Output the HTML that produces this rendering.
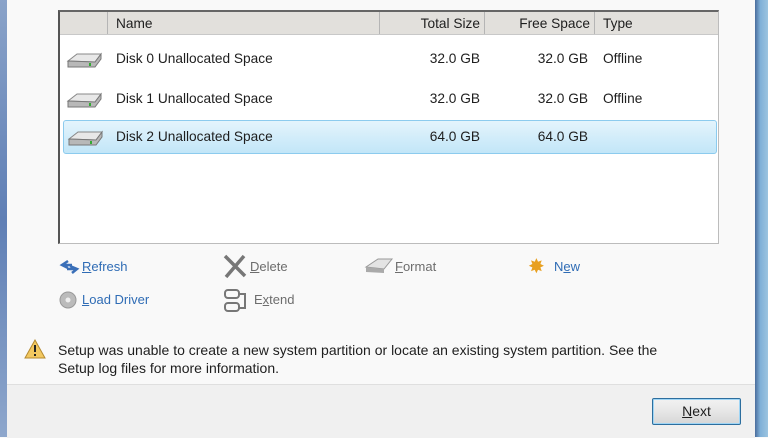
<!DOCTYPE html>
<html><head><style>
body{margin:0;width:768px;height:437px;overflow:hidden;background:#f9f9f9;font-family:"Liberation Sans",sans-serif;font-size:13.7px;color:#1e1e1e;position:relative}
.abs{position:absolute}
.lstrip{left:0;top:0;width:7px;height:437px;background:linear-gradient(#8aa3c9,#5f7fb5 50%,#8ea7cc)}
.rstrip{left:755px;top:0;width:13px;height:437px;background:linear-gradient(90deg,#4a6d9c,#7fb0d8 40%,#9cc4e0)}
.main{left:7px;top:0;width:748px;height:437px;background:#f9f9f9}
.footer{left:7px;top:384px;width:748px;height:53px;background:#f0f0f0;border-top:1px solid #dfdfdf}
.table{left:58px;top:10px;width:658px;height:231px;background:#fff;border:1px solid #bcbcbc;border-left:2px solid #555;border-top:2px solid #666}
.hdr{left:0;top:0;width:658px;height:22px;background:#e2e0dc;border-bottom:1px solid #c8c8c8}
.hc{position:absolute;top:0;height:22px;line-height:23px;box-sizing:border-box;border-right:1px solid #b5b5b5}
.row{position:absolute;left:0;width:658px;height:34px;line-height:34px}
.sel{left:3px;width:652px;background:linear-gradient(#e4f4fc,#c2e6f8);border:1px solid #8ccbee;border-radius:3px}
.c{position:absolute}
.lnk{color:#2f6cb5}
.act{position:absolute;font-size:13px}
u{text-decoration:underline}
.btn{left:652px;top:398px;width:87px;height:25px;border:1px solid #2d6e9e;border-radius:2px;background:linear-gradient(#f2f2f2,#e6e6e6 50%,#d6d6d6);box-shadow:inset 0 0 0 1px #9fd5f5;text-align:center;line-height:25px;font-size:14px}
</style></head><body>
<div class="abs lstrip"></div>
<div class="abs main"></div>
<div class="abs rstrip"></div>
<div class="abs footer"></div>
<div class="abs table">
 <div class="abs hdr">
  <div class="hc" style="left:0;width:48px"></div>
  <div class="hc" style="left:48px;width:272px;padding-left:8px">Name</div>
  <div class="hc" style="left:320px;width:105px;text-align:right;padding-right:4px">Total Size</div>
  <div class="hc" style="left:425px;width:110px;text-align:right;padding-right:4px">Free Space</div>
  <div class="hc" style="left:535px;width:121px;padding-left:8px;border-right:none">Type</div>
 </div>
 <div class="row" style="top:30px"><svg class="c" style="left:5px;top:10px" width="38" height="18"><path d="M3 9 L12 2 L36 2 L30 10 Z" fill="#e8e8e8" stroke="#888"/><path d="M3 9 L30 10 L36 2 L36 7 L30 15 L3 15 Z" fill="#b8b8b8" stroke="#777"/><rect x="24" y="11" width="2" height="3" fill="#3a3"/></svg><span class="c" style="left:56px">Disk 0 Unallocated Space</span><span class="c" style="left:0;width:420px;text-align:right">32.0 GB</span><span class="c" style="left:0;width:528px;text-align:right">32.0 GB</span><span class="c" style="left:543px">Offline</span></div>
 <div class="row" style="top:70px"><svg class="c" style="left:5px;top:10px" width="38" height="18"><path d="M3 9 L12 2 L36 2 L30 10 Z" fill="#e8e8e8" stroke="#888"/><path d="M3 9 L30 10 L36 2 L36 7 L30 15 L3 15 Z" fill="#b8b8b8" stroke="#777"/><rect x="24" y="11" width="2" height="3" fill="#3a3"/></svg><span class="c" style="left:56px">Disk 1 Unallocated Space</span><span class="c" style="left:0;width:420px;text-align:right">32.0 GB</span><span class="c" style="left:0;width:528px;text-align:right">32.0 GB</span><span class="c" style="left:543px">Offline</span></div>
 <div class="row sel" style="top:108px;height:32px;line-height:32px"><svg class="c" style="left:2px;top:9px" width="38" height="18"><path d="M3 9 L12 2 L36 2 L30 10 Z" fill="#e8e8e8" stroke="#888"/><path d="M3 9 L30 10 L36 2 L36 7 L30 15 L3 15 Z" fill="#b8b8b8" stroke="#777"/><rect x="24" y="11" width="2" height="3" fill="#3a3"/></svg><span class="c" style="left:52px">Disk 2 Unallocated Space</span><span class="c" style="left:0;width:416px;text-align:right">64.0 GB</span><span class="c" style="left:0;width:524px;text-align:right">64.0 GB</span></div>
</div>

<svg class="abs" style="left:59px;top:258px" width="22" height="16"><path d="M9 3 L3 7 L9 10 M3 7 H13" stroke="#3a6fb8" stroke-width="2.5" fill="none"/><path d="M11 8 L18 11 L13 15 M8 11 H17" stroke="#3a6fb8" stroke-width="2.5" fill="none"/></svg>
<div class="act lnk" style="left:82px;top:259px"><u>R</u>efresh</div>
<svg class="abs" style="left:222px;top:253px" width="26" height="26"><path d="M3 3 L23 23 M22 3 L4 24" stroke="#777" stroke-width="3.5"/></svg>
<div class="act" style="left:250px;top:259px;color:#6d6d6d"><u>D</u>elete</div>
<svg class="abs" style="left:364px;top:255px" width="30" height="20"><path d="M2 12 L14 4 L28 4 L20 14 Z" fill="#e4e4e4" stroke="#999"/><path d="M2 12 L20 14 L20 18 L2 17 Z" fill="#aaa"/></svg>
<div class="act" style="left:395px;top:259px;color:#6d6d6d"><u>F</u>ormat</div>
<div class="act" style="left:528px;top:254px;color:#e8a020;font-size:20px">✸</div>
<div class="act lnk" style="left:554px;top:259px">N<u>e</u>w</div>
<svg class="abs" style="left:59px;top:291px" width="18" height="18"><circle cx="9" cy="9" r="8" fill="#bbb" stroke="#999"/><circle cx="9" cy="9" r="2.5" fill="#eee"/></svg>
<div class="act lnk" style="left:82px;top:292px"><u>L</u>oad Driver</div>
<svg class="abs" style="left:223px;top:288px" width="26" height="26"><rect x="2" y="2" width="14" height="8" rx="3" fill="none" stroke="#777" stroke-width="2"/><rect x="2" y="15" width="14" height="8" rx="3" fill="none" stroke="#777" stroke-width="2"/><path d="M16 6 H22 V20 H16" fill="none" stroke="#777" stroke-width="2"/></svg>
<div class="act" style="left:254px;top:292px;color:#6d6d6d">E<u>x</u>tend</div>

<svg class="abs" style="left:24px;top:339px" width="22" height="20"><path d="M11 1 L21 19 H1 Z" fill="#f2c860" stroke="#b58a30"/><rect x="10" y="6" width="2" height="7" fill="#222"/><rect x="10" y="15" width="2" height="2" fill="#222"/></svg>
<div class="act" style="left:58px;top:341px;line-height:18px;font-size:14px">Setup was unable to create a new system partition or locate an existing system partition. See the<br>Setup log files for more information.</div>

<div class="abs btn"><u>N</u>ext</div>
</body></html>
